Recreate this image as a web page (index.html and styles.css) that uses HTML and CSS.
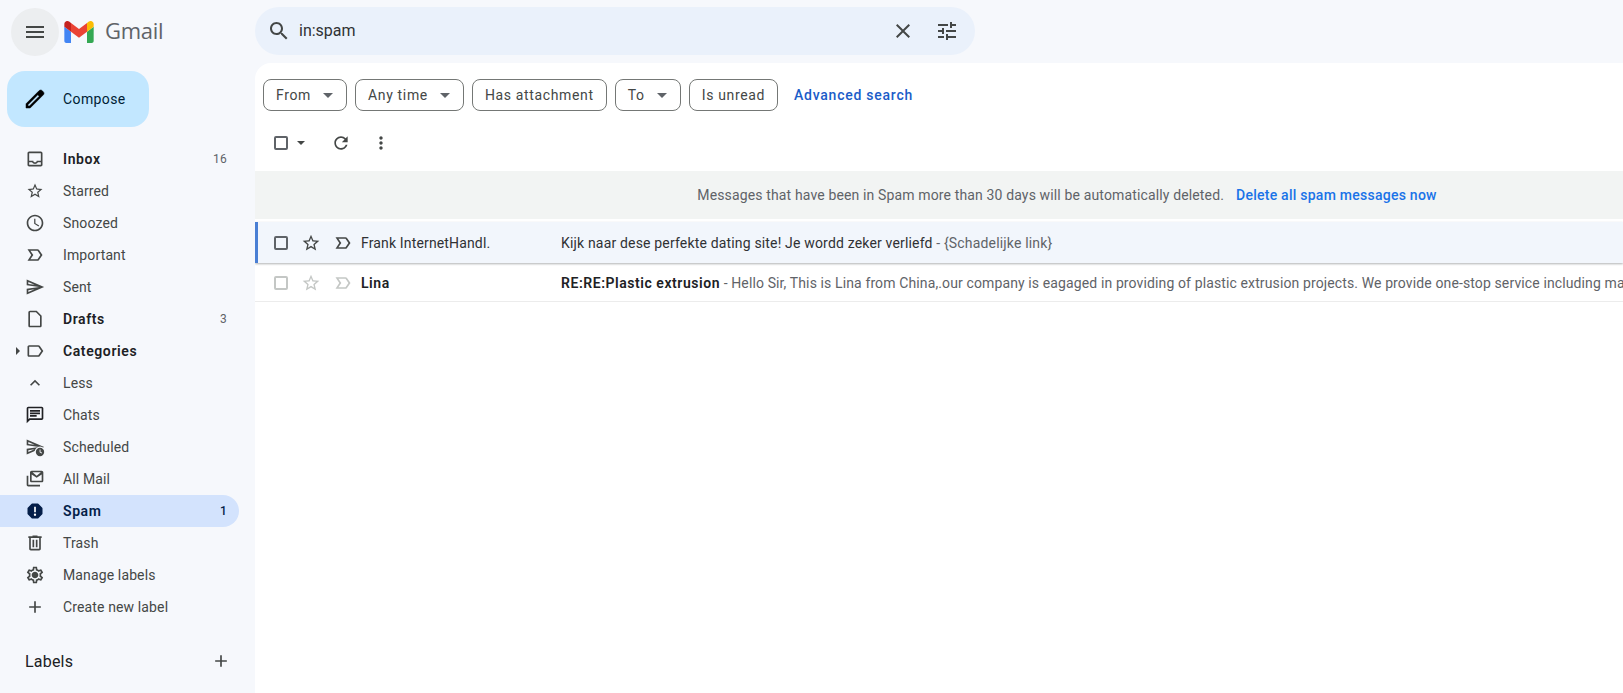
FILE: index.html
```html
<!DOCTYPE html>
<html lang="en">
<head>
<meta charset="utf-8">
<title>Gmail</title>
<link rel="stylesheet" href="styles.css">
</head>
<body>
<div class="app">
  <aside class="sidebar">
    <div class="brand">
      <button class="menu-btn" type="button"><svg class="ic" viewBox="0 0 24 24"><path d="M3 18h18v-2H3v2zm0-5h18v-2H3v2zm0-7v2h18V6H3z"/></svg></button>
      <svg class="logo" viewBox="52 42 88 66"><path fill="#4285f4" d="M58 108h14V74L52 59v43c0 3.32 2.69 6 6 6"/><path fill="#34a853" d="M120 108h14c3.32 0 6-2.69 6-6V59l-20 15"/><path fill="#fbbc04" d="M120 48v26l20-15v-8c0-7.42-8.47-11.65-14.4-7.2"/><path fill="#ea4335" d="M72 74V48l24 18 24-18v26L96 92"/><path fill="#c5221f" d="M52 51v8l20 15V48l-5.6-4.2c-5.94-4.45-14.4-.22-14.4 7.2"/></svg>
      <span class="wordmark">Gmail</span>
    </div>
    <button class="compose" type="button"><svg class="ic-pencil" viewBox="0 0 24 24"><path d="M20.41 4.94l-1.35-1.35c-.78-.78-2.05-.78-2.83 0L3 16.82V21h4.18L20.41 7.77c.79-.78.79-2.05 0-2.83zm-14 14.12L5 19v-1.36l9.82-9.82 1.41 1.41-9.82 9.83z"/></svg><span>Compose</span></button>
    <nav class="nav">
      <a class="nav-item bold"><svg class="ic" viewBox="0 0 24 24"><path d="M19 3H5c-1.1 0-2 .9-2 2v14c0 1.1.9 2 2 2h14c1.1 0 2-.9 2-2V5c0-1.1-.9-2-2-2zm0 16H5v-3h3.56c.69 1.19 1.97 2 3.45 2s2.75-.81 3.45-2H19v3zm0-5h-4.99c0 1.1-.9 2-2 2s-2-.9-2-2H5V5h14v9z"/></svg><span class="nav-label">Inbox</span><span class="count">16</span></a>
      <a class="nav-item"><svg class="ic sm" viewBox="0 0 24 24"><path d="M22 9.24l-7.19-.62L12 2 9.19 8.63 2 9.24l5.46 4.73L5.82 21 12 17.27 18.18 21l-1.63-7.03L22 9.24zM12 15.4l-3.76 2.27 1-4.28-3.32-2.88 4.38-.38L12 6.1l1.71 4.04 4.38.38-3.32 2.88 1 4.28L12 15.4z"/></svg><span class="nav-label">Starred</span></a>
      <a class="nav-item"><svg class="ic" viewBox="0 0 24 24"><path d="M11.99 2C6.47 2 2 6.48 2 12s4.47 10 9.99 10C17.52 22 22 17.52 22 12S17.52 2 11.99 2zM12 20c-4.42 0-8-3.58-8-8s3.58-8 8-8 8 3.58 8 8-3.58 8-8 8zm.5-13H11v6l5.25 3.15.75-1.23-4.5-2.67z"/></svg><span class="nav-label">Snoozed</span></a>
      <a class="nav-item"><svg class="ic" viewBox="0 0 24 24"><path d="M15 19H3l4.5-7L3 5h12c.65 0 1.26.31 1.63.84L21 12l-4.37 6.16c-.37.52-.98.84-1.63.84zm-8.5-2H15l3.5-5-3.5-5H6.5l3.5 5-3.5 5z"/></svg><span class="nav-label">Important</span></a>
      <a class="nav-item"><svg class="ic" viewBox="0 0 24 24"><path d="M4.01 6.03l7.51 3.22-7.52-1 .01-2.22m7.5 8.72L4 17.97v-2.22l7.51-1M2.01 3L2 10l15 2-15 2 .01 7L23 12 2.01 3z"/></svg><span class="nav-label">Sent</span></a>
      <a class="nav-item bold"><svg class="ic" viewBox="0 0 24 24"><path d="M13.17 4L18 8.83V20H6V4h7.17M14 2H6c-1.1 0-2 .9-2 2v16c0 1.1.9 2 2 2h12c1.1 0 2-.9 2-2V8l-6-6z"/></svg><span class="nav-label">Drafts</span><span class="count">3</span></a>
      <a class="nav-item bold"><span class="expander"></span><svg class="ic" viewBox="0 0 24 24"><path d="M17.63 5.84C17.27 5.33 16.67 5 16 5L5 5.01C3.9 5.01 3 5.9 3 7v10c0 1.1.9 1.99 2 1.99L16 19c.67 0 1.27-.33 1.63-.84L22 12l-4.37-6.16zM16 17H5V7h11l3.55 5L16 17z"/></svg><span class="nav-label">Categories</span></a>
      <a class="nav-item"><svg class="ic" viewBox="0 0 24 24"><path d="M12 8l-6 6 1.41 1.41L12 10.83l4.59 4.58L18 14z"/></svg><span class="nav-label">Less</span></a>
      <a class="nav-item"><svg class="ic dark" viewBox="0 0 24 24"><path d="M20 2H4c-1.1 0-2 .9-2 2v18l4-4h14c1.1 0 2-.9 2-2V4c0-1.1-.9-2-2-2zm0 14H5.17L4 17.17V4h16v12zM6 12h8v2H6zm0-3h12v2H6zm0-3h12v2H6z"/></svg><span class="nav-label">Chats</span></a>
      <a class="nav-item"><svg class="ic" viewBox="0 0 24 24"><path d="M4.01 6.03l7.51 3.22-7.52-1 .01-2.22m7.5 8.72L4 17.97v-2.22l7.51-1M2.01 3L2 10l15 2-15 2 .01 7L23 12 2.01 3z"/><circle cx="18" cy="18" r="6.5" fill="#f6f8fc"/><circle cx="18" cy="18" r="5"/><path fill="#f6f8fc" d="M17.5 15h1.1v2.8l1.9 1.1-.55.9-2.45-1.5z"/></svg><span class="nav-label">Scheduled</span></a>
      <a class="nav-item"><svg class="ic" viewBox="0 0 24 24"><path d="M20 2H8c-1.1 0-2 .9-2 2v10c0 1.1.9 2 2 2h12c1.1 0 2-.9 2-2V4c0-1.1-.9-2-2-2zm0 12H8V6.5l6 4 6-4V14zm-6-5.8L9 4h10l-5 4.2zM4 8H2v11c0 1.1.9 2 2 2h14v-2H4V8z"/></svg><span class="nav-label">All Mail</span></a>
      <a class="nav-item active"><svg class="ic navy" viewBox="0 0 24 24"><path stroke="#041e49" stroke-width="2" stroke-linejoin="round" d="M15.3 4H8.7L4 8.7v6.6L8.7 20h6.6l4.7-4.7V8.7z"/><path fill="#fff" d="M11 7h2v6.5h-2zM12 15a1.4 1.4 0 1 1 0 2.8 1.4 1.4 0 0 1 0-2.8z"/></svg><span class="nav-label">Spam</span><span class="count">1</span></a>
      <a class="nav-item"><svg class="ic" viewBox="0 0 24 24"><path d="M15 4V3H9v1H4v2h1v13c0 1.1.9 2 2 2h10c1.1 0 2-.9 2-2V6h1V4h-5zm2 15H7V6h10v13zM9 8h2v9H9zm4 0h2v9h-2z"/></svg><span class="nav-label">Trash</span></a>
      <a class="nav-item"><svg class="ic" viewBox="0 0 24 24"><path d="M19.43 12.98c.04-.32.07-.64.07-.98 0-.34-.03-.66-.07-.98l2.11-1.65c.19-.15.24-.42.12-.64l-2-3.46c-.09-.16-.26-.25-.44-.25-.06 0-.12.01-.17.03l-2.49 1c-.52-.4-1.08-.73-1.69-.98l-.38-2.65C14.46 2.18 14.25 2 14 2h-4c-.25 0-.46.18-.49.42l-.38 2.65c-.61.25-1.17.59-1.69.98l-2.49-1c-.06-.02-.12-.03-.18-.03-.17 0-.34.09-.43.25l-2 3.46c-.13.22-.07.49.12.64l2.11 1.65c-.04.32-.07.65-.07.98 0 .33.03.66.07.98l-2.11 1.65c-.19.15-.24.42-.12.64l2 3.46c.09.16.26.25.44.25.06 0 .12-.01.17-.03l2.49-1c.52.4 1.08.73 1.69.98l.38 2.65c.03.24.24.42.49.42h4c.25 0 .46-.18.49-.42l.38-2.65c.61-.25 1.17-.59 1.69-.98l2.49 1c.06.02.12.03.18.03.17 0 .34-.09.43-.25l2-3.46c.12-.22.07-.49-.12-.64l-2.11-1.65zm-1.98-1.71c.04.31.05.52.05.73 0 .21-.02.43-.05.73l-.14 1.13.89.7 1.08.84-.7 1.21-1.27-.51-1.04-.42-.9.68c-.43.32-.84.56-1.25.73l-1.06.43-.16 1.13-.2 1.35h-1.4l-.19-1.35-.16-1.13-1.06-.43c-.43-.18-.83-.41-1.23-.71l-.91-.7-1.06.43-1.27.51-.7-1.21 1.08-.84.89-.7-.14-1.13c-.03-.31-.05-.54-.05-.74s.02-.43.05-.73l.14-1.13-.89-.7-1.08-.84.7-1.21 1.27.51 1.04.42.9-.68c.43-.32.84-.56 1.25-.73l1.06-.43.16-1.13.2-1.35h1.39l.19 1.35.16 1.13 1.06.43c.43.18.83.41 1.23.71l.91.7 1.06-.43 1.27-.51.7 1.21-1.07.85-.89.7.14 1.13zM12 8c-2.21 0-4 1.79-4 4s1.79 4 4 4 4-1.79 4-4-1.79-4-4-4z"/></svg><span class="nav-label">Manage labels</span></a>
      <a class="nav-item"><svg class="ic" viewBox="0 0 24 24"><path d="M19 13h-6v6h-2v-6H5v-2h6V5h2v6h6v2z"/></svg><span class="nav-label">Create new label</span></a>
    </nav>
    <div class="labels-head"><span>Labels</span><svg class="ic" viewBox="0 0 24 24"><path d="M19 13h-6v6h-2v-6H5v-2h6V5h2v6h6v2z"/></svg></div>
  </aside>
  <div class="content">
    <header class="topbar">
      <div class="search">
        <svg class="ic search-ic" viewBox="0 0 24 24"><path d="M15.5 14h-.79l-.28-.27C15.41 12.59 16 11.11 16 9.5 16 5.91 13.09 3 9.5 3S3 5.91 3 9.5 5.91 16 9.5 16c1.61 0 3.09-.59 4.23-1.57l.27.28v.79l5 4.99L20.49 19l-4.99-5zm-6 0C7.01 14 5 11.99 5 9.5S7.01 5 9.5 5 14 7.01 14 9.5 11.99 14 9.5 14z"/></svg>
        <span class="query">in:spam</span>
        <svg class="ic" viewBox="0 0 24 24"><path d="M19 6.41L17.59 5 12 10.59 6.41 5 5 6.41 10.59 12 5 17.59 6.41 19 12 13.41 17.59 19 19 17.59 13.41 12z"/></svg>
        <svg class="ic tune" viewBox="0 0 24 24"><path d="M3 17v2h6v-2H3zM3 5v2h10V5H3zm10 16v-2h8v-2h-8v-2h-2v6h2zM7 9v2H3v2h4v2h2V9H7zm14 4v-2H11v2h10zm-6-4h2V7h4V5h-4V3h-2v6z"/></svg>
      </div>
    </header>
    <main class="panel">
      <div class="chips">
        <button class="chip" type="button">From<i class="caret"></i></button>
        <button class="chip" type="button">Any time<i class="caret"></i></button>
        <button class="chip" type="button">Has attachment</button>
        <button class="chip" type="button">To<i class="caret"></i></button>
        <button class="chip" type="button">Is unread</button>
        <a class="advanced">Advanced search</a>
      </div>
      <div class="toolbar">
        <span class="check"></span><i class="caret small"></i>
        <svg class="ic tool refresh" viewBox="0 0 24 24"><path d="M17.65 6.35C16.2 4.9 14.21 4 12 4c-4.42 0-7.99 3.58-7.99 8s3.57 8 7.99 8c3.73 0 6.84-2.55 7.73-6h-2.08c-.82 2.33-3.04 4-5.65 4-3.31 0-6-2.69-6-6s2.69-6 6-6c1.66 0 3.14.69 4.22 1.78L13 11h7V4l-2.35 2.35z"/></svg>
        <svg class="ic tool more" viewBox="0 0 24 24"><path d="M12 8c1.1 0 2-.9 2-2s-.9-2-2-2-2 .9-2 2 .9 2 2 2zm0 2c-1.1 0-2 .9-2 2s.9 2 2 2 2-.9 2-2-.9-2-2-2zm0 6c-1.1 0-2 .9-2 2s.9 2 2 2 2-.9 2-2-.9-2-2-2z"/></svg>
      </div>
      <div class="banner"><span>Messages that have been in Spam more than 30 days will be automatically deleted.</span><a class="banner-link">Delete all spam messages now</a></div>
      <div class="row selected">
        <span class="check"></span>
        <svg class="ic row-ic" viewBox="0 0 24 24"><path d="M22 9.24l-7.19-.62L12 2 9.19 8.63 2 9.24l5.46 4.73L5.82 21 12 17.27 18.18 21l-1.63-7.03L22 9.24zM12 15.4l-3.76 2.27 1-4.28-3.32-2.88 4.38-.38L12 6.1l1.71 4.04 4.38.38-3.32 2.88 1 4.28L12 15.4z"/></svg>
        <svg class="ic row-ic" viewBox="0 0 24 24"><path d="M15 19H3l4.5-7L3 5h12c.65 0 1.26.31 1.63.84L21 12l-4.37 6.16c-.37.52-.98.84-1.63.84zm-8.5-2H15l3.5-5-3.5-5H6.5l3.5 5-3.5 5z"/></svg>
        <span class="sender">Frank InternetHandl.</span>
        <span class="snippet first"><span class="subject-plain">Kijk naar dese perfekte dating site! Je wordd zeker verliefd</span> - {Schadelijke link}</span>
      </div>
      <div class="row unread">
        <span class="check"></span>
        <svg class="ic row-ic" viewBox="0 0 24 24"><path d="M22 9.24l-7.19-.62L12 2 9.19 8.63 2 9.24l5.46 4.73L5.82 21 12 17.27 18.18 21l-1.63-7.03L22 9.24zM12 15.4l-3.76 2.27 1-4.28-3.32-2.88 4.38-.38L12 6.1l1.71 4.04 4.38.38-3.32 2.88 1 4.28L12 15.4z"/></svg>
        <svg class="ic row-ic" viewBox="0 0 24 24"><path d="M15 19H3l4.5-7L3 5h12c.65 0 1.26.31 1.63.84L21 12l-4.37 6.16c-.37.52-.98.84-1.63.84zm-8.5-2H15l3.5-5-3.5-5H6.5l3.5 5-3.5 5z"/></svg>
        <span class="sender">Lina</span>
        <span class="snippet"><b class="subject">RE:RE:Plastic extrusion</b> - Hello Sir, This is Lina from China,.our company is eagaged in providing of plastic extrusion projects. We provide one-stop service including manufacturing, installation and training</span>
      </div>
    </main>
  </div>
</div>
</body>
</html>
```
FILE: styles.css
```css
* { box-sizing: border-box; }
html, body { margin: 0; height: 100%; overflow: hidden; }
body { background: #f6f8fc; color: #444746; font-family: Roboto, "Noto Sans", Arial, sans-serif; font-size: 14px; }
button { font: inherit; border: 0; background: none; padding: 0; color: inherit; }
.app { display: flex; height: 693px; }
.ic { width: 24px; height: 24px; flex: none; fill: #444746; display: block; }
.ic.dark { fill: #202124; }
.ic.navy { fill: #041e49; }

.sidebar { width: 255px; flex: none; }
.brand { height: 63px; display: flex; align-items: center; padding-left: 11px; }
.menu-btn { width: 48px; height: 48px; border-radius: 50%; background: #eceef0; display: flex; align-items: center; justify-content: center; }
.logo { width: 30px; height: 22px; margin-left: 5px; }
.wordmark { font-family: "Open Sans", sans-serif; font-size: 22px; color: #5f6368; margin-left: 11px; letter-spacing: -0.3px; padding-bottom: 3px; }
.compose { margin: 8px 0 0 7px; width: 142px; height: 56px; border-radius: 18px; background: #c2e7ff; color: #001d35; display: flex; align-items: center; padding-left: 16px; gap: 16px; letter-spacing: .4px; }
.ic-pencil { width: 24px; height: 24px; fill: #000; stroke: #000; stroke-width: .5; }

.nav { margin-top: 16px; padding-right: 16px; display: flex; flex-direction: column; }
.nav-item { height: 32px; display: flex; align-items: center; padding: 0 12px 0 25px; border-radius: 0 16px 16px 0; letter-spacing: .13px; position: relative; color: #444746; }
.nav-item .ic { width: 20px; height: 20px; }
.nav-item .ic.sm { width: 18px; height: 18px; margin: 0 1px; }
.nav-label { margin-left: 18px; flex: 1; }
.bold { font-weight: 600; color: #202124; letter-spacing: .6px; }
.count { font-size: 12px; font-weight: 400; letter-spacing: .2px; color: #5f6368; }
.active { background: #d3e3fd; color: #041e49; font-weight: 600; letter-spacing: .6px; }
.active .count { color: #041e49; font-weight: 500; }
.expander { position: absolute; left: 16px; top: 12px; border-left: 4px solid #444746; border-top: 4px solid transparent; border-bottom: 4px solid transparent; }
.labels-head { margin-top: 26px; padding: 0 24px 0 25px; display: flex; align-items: center; justify-content: space-between; font-size: 16px; color: #202124; letter-spacing: .2px; height: 24px; }
.labels-head .ic { width: 20px; height: 20px; }

.content { flex: 1; min-width: 0; display: flex; flex-direction: column; }
.topbar { height: 63px; padding-top: 7px; flex: none; }
.search { width: 720px; height: 48px; border-radius: 24px; background: #eaf1fb; display: flex; align-items: center; padding: 0 12px; }
.query { flex: 1; margin-left: 8px; font-size: 16px; color: #303134; padding-bottom: 2px; }
.tune { margin-left: 20px; margin-right: 4px; }

.panel { flex: 1; background: #fff; border-top-left-radius: 16px; min-width: 0; overflow: hidden; }
.chips { display: flex; align-items: center; gap: 8px; padding: 16px 0 0 8px; }
.chip { height: 32px; border: 1px solid #747775; border-radius: 8px; padding: 0 12px; display: flex; align-items: center; color: #444746; letter-spacing: .65px; background: #fff; }
.caret { display: block; width: 0; height: 0; margin-left: 12px; margin-right: 1px; border-left: 5px solid transparent; border-right: 5px solid transparent; border-top: 5px solid #5f6368; }
.advanced { color: #1a5cc8; font-weight: 500; letter-spacing: .75px; margin-left: 8px; }

.toolbar { height: 48px; margin-top: 8px; display: flex; align-items: center; padding-left: 19px; }
.check { width: 14px; height: 14px; border: 2px solid #5f6368; border-radius: 2px; flex: none; display: block; }
.caret.small { margin-left: 9px; margin-right: 0; border-left-width: 4px; border-right-width: 4px; border-top-width: 4px; border-top-color: #444746; }
.tool { width: 20px; height: 20px; }
.refresh { margin-left: 26px; }
.more { margin-left: 20px; }

.banner { margin-top: 4px; height: 48px; background: #f2f4f3; display: flex; align-items: center; justify-content: center; gap: 12px; color: #5f6368; letter-spacing: .14px; padding-left: 256px; }
.banner-link { color: #1a73e8; font-weight: 500; letter-spacing: .25px; }

.row { display: flex; align-items: center; padding-left: 19px; white-space: nowrap; overflow: hidden; }
.row .check { margin-right: 13px; }
.row-ic { width: 20px; height: 20px; margin-right: 12px; }
.row-ic + .row-ic { margin-right: 0; }
.sender { width: 193px; margin-left: 8px; flex: none; letter-spacing: .15px; }
.snippet { flex: 1; min-width: 0; overflow: hidden; color: #5f6368; letter-spacing: .12px; margin-left: 7px; }
.snippet.first { letter-spacing: .17px; }
.selected { height: 41px; margin-top: 3px; background: #f2f6fc; border-left: 3px solid #4a7fd4; padding-left: 16px; box-shadow: 0 1px 2px rgba(60,64,67,.4); position: relative; color: #303134; }
.subject-plain { color: #303134; }
.unread { height: 39px; padding-top: 2px; border-bottom: 1px solid #ececec; }
.unread .check { border-color: #c4c7c5; }
.unread .row-ic { fill: #c4c7c5; }
.unread .sender, .subject { font-weight: 600; color: #202124; letter-spacing: .55px; }
```
